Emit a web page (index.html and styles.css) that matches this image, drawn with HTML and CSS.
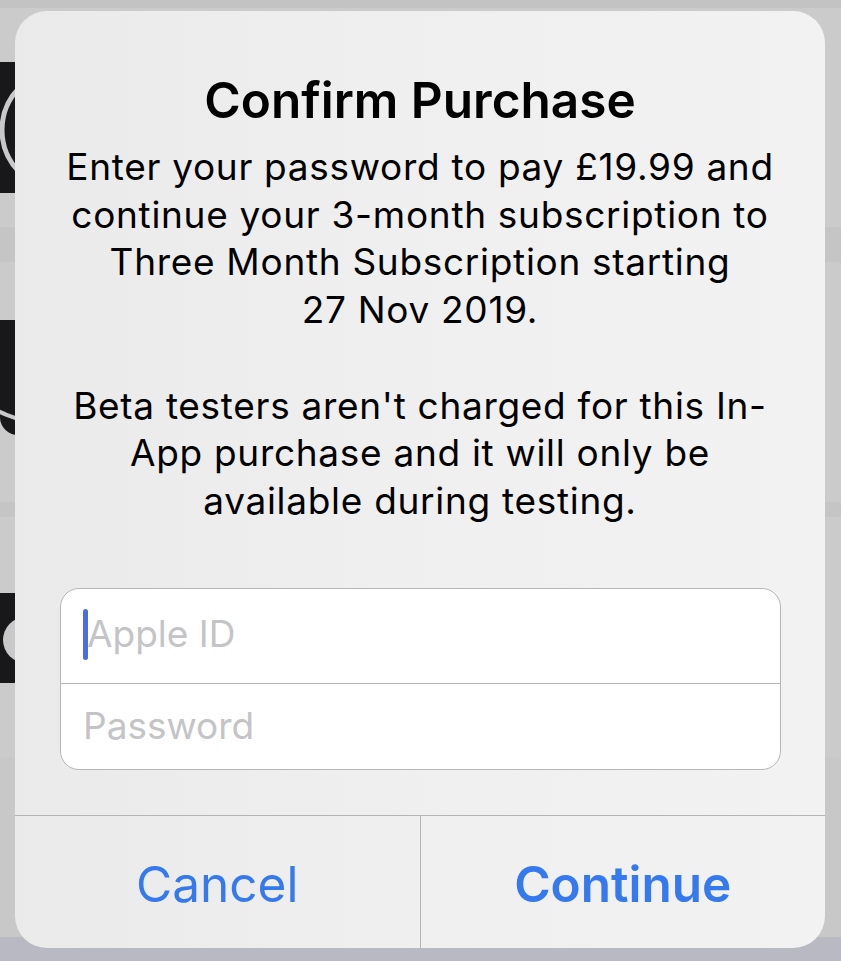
FILE: index.html
```html
<!DOCTYPE html>
<html lang="en">
<head>
<meta charset="utf-8">
<title>Confirm Purchase</title>
<link rel="stylesheet" href="styles.css">
</head>
<body>
<div class="backdrop">
  <div class="strip-top"></div>
  <div class="row row-a">
    <div class="icon icon-a">
      <svg width="40" height="131" viewBox="0 0 40 131"><circle cx="62" cy="68" r="60" fill="none" stroke="#c9c9c9" stroke-width="5"/></svg>
    </div>
  </div>
  <div class="band band-a"></div>
  <div class="row row-b">
    <div class="icon icon-b">
      <svg width="40" height="115" viewBox="0 0 40 115"><circle cx="60" cy="-40" r="145" fill="none" stroke="#c9c9c9" stroke-width="4"/></svg>
    </div>
  </div>
  <div class="band band-b"></div>
  <div class="row row-c">
    <div class="icon icon-c">
      <svg width="40" height="90" viewBox="0 0 40 90"><circle cx="26" cy="47" r="23" fill="#c9c9c9"/></svg>
    </div>
  </div>
  <div class="row row-d"></div>
  <div class="strip-bottom"></div>
</div>

<div class="alert">
  <div class="alert-body">
    <h1 class="alert-title">Confirm Purchase</h1>
    <p class="alert-msg">Enter your password to pay £19.99 and<br>continue your 3-month subscription to<br>Three Month Subscription starting<br>27 Nov 2019.</p>
    <p class="alert-msg alert-msg-2">Beta testers aren't charged for this In-<br>App purchase and it will only be<br>available during testing.</p>
    <div class="fields">
      <div class="field field-first"><span class="caret"></span><span class="placeholder">Apple ID</span></div>
      <div class="field field-second"><span class="placeholder">Password</span></div>
    </div>
  </div>
  <div class="actions">
    <div class="action">Cancel</div>
    <div class="action action-primary">Continue</div>
  </div>
</div>
</body>
</html>
```
FILE: styles.css
```css
html, body {
  margin: 0;
  padding: 0;
}
body {
  width: 841px;
  height: 961px;
  overflow: hidden;
  background: #cbcbcb;
  font-family: "Inter", "Roboto", sans-serif;
  position: relative;
}

/* dimmed app behind the alert */
.backdrop {
  display: flex;
  flex-direction: column;
  height: 961px;
}
.strip-top {
  height: 8px;
  background: #c3c3c3;
}
.row {
  display: flex;
  align-items: flex-start;
  background: #cbcbcb;
}
.row-a { height: 219px; }
.row-b { height: 240px; }
.row-c { height: 240px; }
.row-d { height: 180px; background: #c8c8c8; }
.band-a { height: 35px; background: #c5c5c5; }
.band-b { height: 15px; background: #c5c5c5; }
.strip-bottom {
  flex: 1;
  background: #b8b9c3;
}
.icon {
  width: 40px;
  background: #18181a;
  overflow: hidden;
}
.icon svg { display: block; }
.icon-a { height: 131px; margin-top: 54px; }
.icon-b { height: 115px; margin-top: 58px; border-bottom-left-radius: 18px; }
.icon-c { height: 90px; margin-top: 76px; }

/* alert */
.alert {
  position: absolute;
  left: 15px;
  top: 11px;
  width: 810px;
  height: 937px;
  border-radius: 32px;
  background: linear-gradient(90deg, #eaeaea 0%, #efefef 45%, #f2f2f2 100%);
  display: flex;
  flex-direction: column;
  overflow: hidden;
}
.alert-body {
  flex: 1;
  padding-top: 59px;
  display: flex;
  flex-direction: column;
  align-items: center;
}
.alert-title {
  margin: 0;
  font-size: 49.5px;
  line-height: 60px;
  font-weight: 600;
  color: #000;
  white-space: nowrap;
}
.alert-msg {
  margin: 13px 0 0;
  font-size: 37px;
  line-height: 47.7px;
  letter-spacing: 0.7px;
  font-weight: 400;
  color: #000;
  text-align: center;
  white-space: nowrap;
}
.alert-msg-2 {
  margin-top: 47.7px;
}

.fields {
  margin-top: 63px;
  width: 719px;
  align-self: flex-start;
  margin-left: 45px;
  background: #fff;
  border: 1px solid #b6b6b6;
  border-radius: 19px;
  overflow: hidden;
}
.field {
  padding-left: 22px;
  font-size: 37px;
  color: #c4c4c7;
  white-space: nowrap;
}
.field-first {
  height: 94px;
  line-height: 90px;
  border-bottom: 1px solid #b6b6b6;
}
.field-second {
  height: 85px;
  line-height: 84px;
}
.caret {
  display: inline-block;
  width: 5px;
  height: 51px;
  margin-top: 20px;
  margin-right: -1px;
  vertical-align: top;
  border-radius: 3px;
  background: #4a6ee0;
}

.actions {
  height: 132px;
  border-top: 1px solid #b4b4b4;
  display: flex;
}
.action {
  flex: 1;
  text-align: center;
  font-size: 49.5px;
  line-height: 132px;
  padding-top: 2px;
  box-sizing: border-box;
  color: #3579ef;
}
.action + .action {
  border-left: 1px solid #b4b4b4;
}
.action-primary {
  font-weight: 600;
}
```
